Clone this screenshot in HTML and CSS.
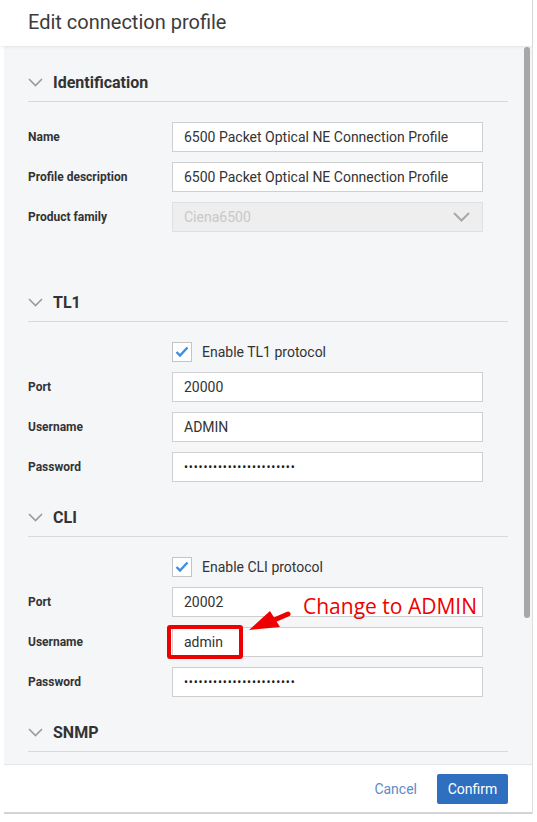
FILE: index.html
```html
<!DOCTYPE html>
<html lang="en">
<head>
<meta charset="utf-8">
<title>Edit connection profile</title>
<link rel="stylesheet" href="styles.css">
</head>
<body>
<div class="modal">
  <header class="modal-head">
    <h1 class="modal-title">Edit connection profile</h1>
  </header>
  <div class="modal-body">
    <section class="sec sec-first">
      <div class="sec-head">
        <svg class="chev" width="15" height="9" viewBox="0 0 15 9"><path d="M1 1 L7.5 7.5 L14 1" fill="none" stroke="#9a9a9a" stroke-width="1.6"/></svg>
        <span class="sec-title">Identification</span>
      </div>
      <div class="fields">
        <div class="row"><label class="lbl">Name</label><input class="inp" type="text" value="6500 Packet Optical NE Connection Profile"></div>
        <div class="row"><label class="lbl">Profile description</label><input class="inp" type="text" value="6500 Packet Optical NE Connection Profile"></div>
        <div class="row"><label class="lbl">Product family</label>
          <div class="sel"><span>Ciena6500</span>
            <svg width="17" height="10" viewBox="0 0 17 10"><path d="M1 1 L8.5 8.5 L16 1" fill="none" stroke="#a8a8a8" stroke-width="2"/></svg>
          </div>
        </div>
      </div>
    </section>

    <section class="sec">
      <div class="sec-head">
        <svg class="chev" width="15" height="9" viewBox="0 0 15 9"><path d="M1 1 L7.5 7.5 L14 1" fill="none" stroke="#9a9a9a" stroke-width="1.6"/></svg>
        <span class="sec-title">TL1</span>
      </div>
      <div class="fields">
        <div class="row"><span></span>
          <div class="check"><span class="box"><svg width="14" height="12" viewBox="0 0 14 12"><path d="M1.5 6 L5 9.5 L12.5 1.5" fill="none" stroke="#3b8ee0" stroke-width="2.4"/></svg></span><span class="check-lbl">Enable TL1 protocol</span></div>
        </div>
        <div class="row"><label class="lbl">Port</label><input class="inp" type="text" value="20000"></div>
        <div class="row"><label class="lbl">Username</label><input class="inp" type="text" value="ADMIN"></div>
        <div class="row"><label class="lbl">Password</label><input class="inp pw" type="password" value="xxxxxxxxxxxxxxxxxxxxxxx"></div>
      </div>
    </section>

    <section class="sec">
      <div class="sec-head">
        <svg class="chev" width="15" height="9" viewBox="0 0 15 9"><path d="M1 1 L7.5 7.5 L14 1" fill="none" stroke="#9a9a9a" stroke-width="1.6"/></svg>
        <span class="sec-title">CLI</span>
      </div>
      <div class="fields">
        <div class="row"><span></span>
          <div class="check"><span class="box"><svg width="14" height="12" viewBox="0 0 14 12"><path d="M1.5 6 L5 9.5 L12.5 1.5" fill="none" stroke="#3b8ee0" stroke-width="2.4"/></svg></span><span class="check-lbl">Enable CLI protocol</span></div>
        </div>
        <div class="row"><label class="lbl">Port</label><input class="inp" type="text" value="20002"></div>
        <div class="row"><label class="lbl">Username</label><input class="inp" type="text" value="admin"></div>
        <div class="row"><label class="lbl">Password</label><input class="inp pw" type="password" value="xxxxxxxxxxxxxxxxxxxxxxx"></div>
      </div>
    </section>

    <section class="sec">
      <div class="sec-head">
        <svg class="chev" width="15" height="9" viewBox="0 0 15 9"><path d="M1 1 L7.5 7.5 L14 1" fill="none" stroke="#9a9a9a" stroke-width="1.6"/></svg>
        <span class="sec-title">SNMP</span>
      </div>
    </section>

    <div class="scroll-thumb"></div>
  </div>
  <footer class="modal-foot">
    <button class="btn-link" type="button">Cancel</button>
    <button class="btn-primary" type="button">Confirm</button>
  </footer>

  <div class="anno-box"></div>
  <svg class="anno-arrow" width="60" height="40" viewBox="240 605 60 40">
    <polygon points="249,630 270,611 280,627" fill="#ee0000"/>
    <line x1="272" y1="621" x2="288" y2="614" stroke="#ee0000" stroke-width="5" stroke-linecap="round"/>
  </svg>
  <div class="anno-text">Change to ADMIN</div>
</div>
</body>
</html>
```

FILE: styles.css
```css
* { box-sizing: border-box; }
html, body { margin: 0; padding: 0; background: #ffffff; }
body { font-family: Roboto, "Liberation Sans", sans-serif; color: #333; }

.modal {
  position: relative;
  margin-left: 4px;
  width: 529px;
  border-right: 1px solid #dedede;
  background: #fff;
}

.modal-head {
  height: 46px;
  display: flex;
  align-items: center;
  padding-left: 28px;
  margin-left: -4px;
  background: #fff;
  box-shadow: 0 1px 3px rgba(0,0,0,0.08);
  position: relative;
  z-index: 1;
}
.modal-title {
  margin: 0;
  font-size: 20px;
  font-weight: 400;
  color: #3c3c3c;
  padding-bottom: 3px;
}

.modal-body {
  position: relative;
  height: 718px;
  overflow: hidden;
  background: #f5f6f8;
  padding: 17px 24px 0 24px;
}

.sec-head {
  height: 39px;
  display: flex;
  align-items: center;
  gap: 10px;
  border-bottom: 1px solid #d9d9d9;
}
.chev { display: block; }
.sec-title { font-size: 16px; font-weight: 700; color: #333; }

.fields {
  display: flex;
  flex-direction: column;
  gap: 10px;
  padding: 20px 0 16px 0;
}
.sec-first .fields { padding-bottom: 51px; }

.row {
  display: grid;
  grid-template-columns: 144px 311px;
  align-items: center;
}
.lbl { font-size: 12px; font-weight: 700; color: #333; }

.inp {
  height: 30px;
  width: 311px;
  border: 1px solid #cfcfcf;
  background: #fff;
  padding: 0 11px;
  font-family: Roboto, "Liberation Sans", sans-serif;
  font-size: 14px;
  color: #333;
  outline: none;
  margin: 0;
}
.pw { font-size: 12px; letter-spacing: 0.8px; color: #1a1a1a; }

.sel {
  height: 30px;
  width: 311px;
  border: 1px solid #e0e0e0;
  background: #eeeeee;
  padding: 0 12px 0 11px;
  display: flex;
  align-items: center;
  justify-content: space-between;
  font-size: 14px;
  color: #c8c8c8;
}

.check { display: flex; align-items: center; gap: 10px; height: 20px; }
.box {
  width: 20px; height: 20px;
  border: 1px solid #c4c4c4;
  background: #fff;
  display: flex; align-items: center; justify-content: center;
}
.check-lbl { font-size: 14px; color: #333; }

.scroll-thumb {
  position: absolute;
  right: 2px;
  top: 1px;
  width: 6px;
  height: 571px;
  background: #a8a8a8;
  border-radius: 3px;
}

.modal-foot {
  height: 50px;
  border-top: 1px solid #e6e6e6;
  border-bottom: 2px solid #d4d4d4;
  background: #fff;
  display: flex;
  align-items: center;
  justify-content: flex-end;
  gap: 20px;
  padding-right: 24px;
}
.btn-link {
  border: 0; background: none; padding: 0;
  font-family: Roboto, "Liberation Sans", sans-serif;
  font-size: 14px; color: #5b8bc8;
}
.btn-primary {
  width: 71px; height: 30px;
  border: 0; border-radius: 2px;
  background: #2f6fbf;
  color: #fff;
  font-family: Roboto, "Liberation Sans", sans-serif;
  font-size: 14px;
}

.anno-box {
  position: absolute;
  left: 163px;
  top: 625px;
  width: 76px;
  height: 34px;
  border: 4px solid #ee0000;
  border-radius: 3px;
}
.anno-arrow { position: absolute; left: 236px; top: 605px; }
.anno-text {
  position: absolute;
  left: 299px;
  top: 592px;
  font-family: "Open Sans", "Noto Sans", sans-serif;
  font-size: 21px;
  color: #ee0000;
  white-space: nowrap;
}
```
